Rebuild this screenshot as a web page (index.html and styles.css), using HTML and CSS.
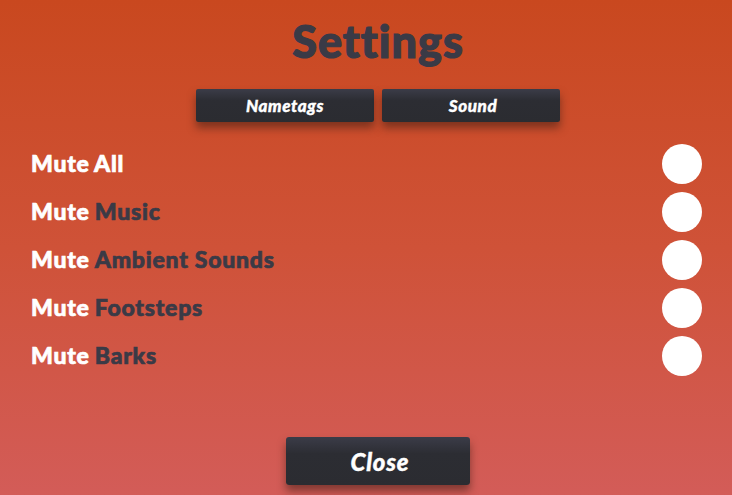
FILE: index.html
```html
<!DOCTYPE html>
<html lang="en">
<head>
    <meta charset="UTF-8">
    <title>Settings</title>
    <link rel="stylesheet" href="styles.css">
</head>
<body>
    <div class="settings">
        <h1>Settings</h1>
        <div class="tabs">
            <button type="button" class="btn">Nametags</button>
            <button type="button" class="btn">Sound</button>
        </div>
        <div class="options">
            <div class="option">
                <span class="label">Mute All</span>
                <span class="toggle"></span>
            </div>
            <div class="option">
                <span class="label">Mute <span class="dark">Music</span></span>
                <span class="toggle"></span>
            </div>
            <div class="option">
                <span class="label">Mute <span class="dark">Ambient Sounds</span></span>
                <span class="toggle"></span>
            </div>
            <div class="option">
                <span class="label">Mute <span class="dark">Footsteps</span></span>
                <span class="toggle"></span>
            </div>
            <div class="option">
                <span class="label">Mute <span class="dark">Barks</span></span>
                <span class="toggle"></span>
            </div>
        </div>
        <div class="footer">
            <button type="button" class="btn btn-close">Close</button>
        </div>
    </div>
</body>
</html>
```

FILE: styles.css
```css
html, body {
    margin: 0;
    padding: 0;
    height: 100%;
}

body {
    font-family: Lato, "Open Sans", sans-serif;
    background: linear-gradient(to bottom, #c9481f 0%, #cf5238 50%, #d35c58 100%);
    color: #3a3a46;
    overflow: hidden;
}

.settings {
    display: flex;
    flex-direction: column;
    height: 495px;
}

h1 {
    margin: 15px 0 0 24px;
    height: 52px;
    line-height: 52px;
    font-size: 45px;
    font-weight: 900;
    letter-spacing: 1px;
    text-align: center;
    -webkit-text-stroke: 1.2px #3a3a46;
}

.tabs {
    display: flex;
    justify-content: center;
    gap: 8px;
    margin: 22px 0 0 24px;
}

.btn {
    width: 178px;
    height: 33px;
    padding: 0;
    border: none;
    border-radius: 2px;
    background: linear-gradient(to bottom, #3b3c48 0%, #2c2d33 35%, #2b2c31 100%);
    box-shadow: 0 6px 9px rgba(60, 30, 20, 0.55);
    color: #fff;
    font-family: inherit;
    font-size: 17px;
    font-weight: 900;
    font-style: italic;
    letter-spacing: 0.6px;
    -webkit-text-stroke: 0.4px #fff;
}

.tabs .btn + .btn {
    padding-left: 4px;
}

.options {
    display: flex;
    flex-direction: column;
    gap: 8px;
    margin: 22px 30px 0 31px;
}

.option {
    display: flex;
    justify-content: space-between;
    align-items: center;
    height: 40px;
}

.label {
    padding-bottom: 2px;
    color: #fff;
    font-size: 23px;
    font-weight: 900;
    letter-spacing: 0.75px;
    word-spacing: -1px;
    -webkit-text-stroke: 0.7px currentColor;
}

.dark {
    color: #3a3a46;
    word-spacing: 0;
}

.toggle {
    width: 40px;
    height: 40px;
    border-radius: 50%;
    background-color: #fff;
}

.footer {
    display: flex;
    justify-content: center;
    margin: 61px 0 0 24px;
}

.btn-close {
    width: 184px;
    height: 48px;
    padding-left: 4px;
    border-radius: 3px;
    font-size: 24px;
    letter-spacing: 0.8px;
}
```
